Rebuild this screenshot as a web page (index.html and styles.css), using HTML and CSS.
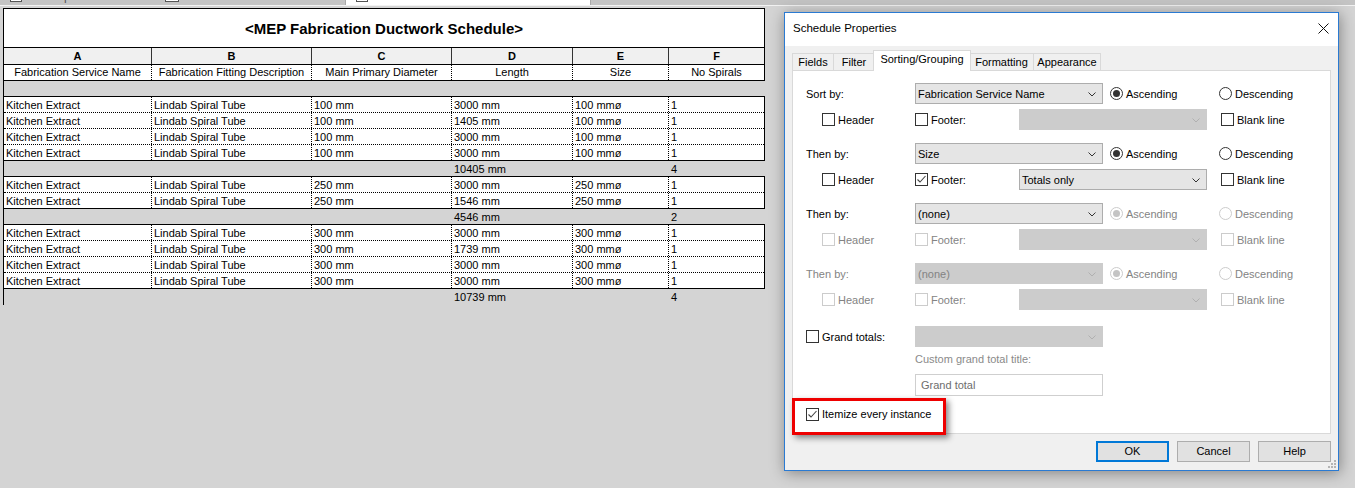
FILE: index.html
```html
<!DOCTYPE html>
<html>
<head>
<meta charset="utf-8">
<title>MEP Fabrication Ductwork Schedule</title>
<link rel="stylesheet" href="styles.css">
</head>
<body>
<div class="tabbar">
  <div class="doc-tab t1"><svg class="ticon" width="12" height="12" viewBox="0 0 12 12"><rect x="0.5" y="0.5" width="11" height="11" fill="#fff" stroke="#555"/></svg><span class="tlabel">3D - Splash Sheet</span></div>
  <div class="doc-tab t2"><svg class="ticon" width="14" height="12" viewBox="0 0 14 12"><rect x="0.5" y="0.5" width="13" height="11" fill="#fff" stroke="#555"/></svg><span class="tlabel">00 - GROUND FLOOR PLAN</span></div>
  <div class="doc-tab t3 active"><svg class="ticon" width="12" height="12" viewBox="0 0 12 12"><rect x="0.5" y="0.5" width="11" height="11" fill="#fff" stroke="#555"/></svg><span class="tlabel">MEP Fabrication Ductwork Schedul</span><span class="tclose">×</span></div>
</div>
<div class="tabline"></div>

<div class="view">
  <div class="sched">
    <div class="s-title">&lt;MEP Fabrication Ductwork Schedule&gt;</div>
    <div class="s-row s-letters"><div>A</div><div>B</div><div>C</div><div>D</div><div>E</div><div>F</div></div>
    <div class="s-row s-names"><div>Fabrication Service Name</div><div>Fabrication Fitting Description</div><div>Main Primary Diameter</div><div>Length</div><div>Size</div><div>No Spirals</div></div>
    <div class="s-gap"></div>

    <div class="s-group">
      <div class="s-row"><div>Kitchen Extract</div><div>Lindab Spiral Tube</div><div>100 mm</div><div>3000 mm</div><div>100 mmø</div><div>1</div></div>
      <div class="s-row"><div>Kitchen Extract</div><div>Lindab Spiral Tube</div><div>100 mm</div><div>1405 mm</div><div>100 mmø</div><div>1</div></div>
      <div class="s-row"><div>Kitchen Extract</div><div>Lindab Spiral Tube</div><div>100 mm</div><div>3000 mm</div><div>100 mmø</div><div>1</div></div>
      <div class="s-row"><div>Kitchen Extract</div><div>Lindab Spiral Tube</div><div>100 mm</div><div>3000 mm</div><div>100 mmø</div><div>1</div></div>
    </div>
    <div class="s-row s-total"><div></div><div></div><div></div><div>10405 mm</div><div></div><div>4</div></div>

    <div class="s-group">
      <div class="s-row"><div>Kitchen Extract</div><div>Lindab Spiral Tube</div><div>250 mm</div><div>3000 mm</div><div>250 mmø</div><div>1</div></div>
      <div class="s-row"><div>Kitchen Extract</div><div>Lindab Spiral Tube</div><div>250 mm</div><div>1546 mm</div><div>250 mmø</div><div>1</div></div>
    </div>
    <div class="s-row s-total"><div></div><div></div><div></div><div>4546 mm</div><div></div><div>2</div></div>

    <div class="s-group">
      <div class="s-row"><div>Kitchen Extract</div><div>Lindab Spiral Tube</div><div>300 mm</div><div>3000 mm</div><div>300 mmø</div><div>1</div></div>
      <div class="s-row"><div>Kitchen Extract</div><div>Lindab Spiral Tube</div><div>300 mm</div><div>1739 mm</div><div>300 mmø</div><div>1</div></div>
      <div class="s-row"><div>Kitchen Extract</div><div>Lindab Spiral Tube</div><div>300 mm</div><div>3000 mm</div><div>300 mmø</div><div>1</div></div>
      <div class="s-row"><div>Kitchen Extract</div><div>Lindab Spiral Tube</div><div>300 mm</div><div>3000 mm</div><div>300 mmø</div><div>1</div></div>
    </div>
    <div class="s-row s-total last"><div></div><div></div><div></div><div>10739 mm</div><div></div><div>4</div></div>
  </div>
</div>

<div class="dialog">
  <div class="dlg-title">
    <span>Schedule Properties</span>
    <svg class="close" width="11" height="11" viewBox="0 0 11 11"><path d="M0.5 0.5L10.5 10.5M10.5 0.5L0.5 10.5" stroke="#111" stroke-width="1"/></svg>
  </div>
  <div class="dlg-body">
    <div class="tabs">
      <div class="tab w-fields">Fields</div>
      <div class="tab w-filter">Filter</div>
      <div class="tab sel w-sort">Sorting/Grouping</div>
      <div class="tab w-fmt">Formatting</div>
      <div class="tab w-app">Appearance</div>
    </div>
    <div class="panel">
      <div class="grp">
        <div class="srow">
          <span class="lbl">Sort by:</span>
          <div class="combo">Fabrication Service Name<svg class="chev" width="8" height="5" viewBox="0 0 8 5"><path d="M0.5 0.5L4 4L7.5 0.5" fill="none" stroke="#333"/></svg></div>
          <span class="rad asc"><i class="rb on"></i>Ascending</span>
          <span class="rad"><i class="rb"></i>Descending</span>
        </div>
        <div class="orow">
          <span class="chk hdr"><i class="cb"></i>Header</span>
          <span class="chk ftr"><i class="cb"></i>Footer:</span>
          <div class="combo dis"><svg class="chev" width="8" height="5" viewBox="0 0 8 5"><path d="M0.5 0.5L4 4L7.5 0.5" fill="none" stroke="#b0b0b0"/></svg></div>
          <span class="chk blank"><i class="cb"></i>Blank line</span>
        </div>
      </div>

      <div class="grp">
        <div class="srow">
          <span class="lbl">Then by:</span>
          <div class="combo">Size<svg class="chev" width="8" height="5" viewBox="0 0 8 5"><path d="M0.5 0.5L4 4L7.5 0.5" fill="none" stroke="#333"/></svg></div>
          <span class="rad asc"><i class="rb on"></i>Ascending</span>
          <span class="rad"><i class="rb"></i>Descending</span>
        </div>
        <div class="orow">
          <span class="chk hdr"><i class="cb"></i>Header</span>
          <span class="chk ftr"><i class="cb"><svg width="11" height="11" viewBox="0 0 11 11"><path d="M1.5 5.5L4 8L9.5 2" fill="none" stroke="#444" stroke-width="1.1"/></svg></i>Footer:</span>
          <div class="combo">Totals only<svg class="chev" width="8" height="5" viewBox="0 0 8 5"><path d="M0.5 0.5L4 4L7.5 0.5" fill="none" stroke="#333"/></svg></div>
          <span class="chk blank"><i class="cb"></i>Blank line</span>
        </div>
      </div>

      <div class="grp">
        <div class="srow">
          <span class="lbl">Then by:</span>
          <div class="combo">(none)<svg class="chev" width="8" height="5" viewBox="0 0 8 5"><path d="M0.5 0.5L4 4L7.5 0.5" fill="none" stroke="#333"/></svg></div>
          <span class="rad asc dis"><i class="rb on"></i>Ascending</span>
          <span class="rad dis"><i class="rb"></i>Descending</span>
        </div>
        <div class="orow dis">
          <span class="chk hdr"><i class="cb"></i>Header</span>
          <span class="chk ftr"><i class="cb"></i>Footer:</span>
          <div class="combo dis"><svg class="chev" width="8" height="5" viewBox="0 0 8 5"><path d="M0.5 0.5L4 4L7.5 0.5" fill="none" stroke="#b0b0b0"/></svg></div>
          <span class="chk blank"><i class="cb"></i>Blank line</span>
        </div>
      </div>

      <div class="grp dis">
        <div class="srow">
          <span class="lbl">Then by:</span>
          <div class="combo dis">(none)<svg class="chev" width="8" height="5" viewBox="0 0 8 5"><path d="M0.5 0.5L4 4L7.5 0.5" fill="none" stroke="#b0b0b0"/></svg></div>
          <span class="rad asc"><i class="rb on"></i>Ascending</span>
          <span class="rad"><i class="rb"></i>Descending</span>
        </div>
        <div class="orow">
          <span class="chk hdr"><i class="cb"></i>Header</span>
          <span class="chk ftr"><i class="cb"></i>Footer:</span>
          <div class="combo dis"><svg class="chev" width="8" height="5" viewBox="0 0 8 5"><path d="M0.5 0.5L4 4L7.5 0.5" fill="none" stroke="#b0b0b0"/></svg></div>
          <span class="chk blank"><i class="cb"></i>Blank line</span>
        </div>
      </div>

      <div class="grand">
        <span class="chk glbl"><i class="cb"></i>Grand totals:</span>
        <div class="combo dis"><svg class="chev" width="8" height="5" viewBox="0 0 8 5"><path d="M0.5 0.5L4 4L7.5 0.5" fill="none" stroke="#b0b0b0"/></svg></div>
      </div>
      <div class="custom-lbl">Custom grand total title:</div>
      <div class="tbox">Grand total</div>
      <div class="itemize"><span class="chk"><i class="cb"><svg width="11" height="11" viewBox="0 0 11 11"><path d="M1.5 5.5L4 8L9.5 2" fill="none" stroke="#444" stroke-width="1.1"/></svg></i>Itemize every instance</span></div>
    </div>
    <div class="buttons">
      <div class="btn ok">OK</div>
      <div class="btn">Cancel</div>
      <div class="btn">Help</div>
    </div>
  </div>
  <svg class="grip" width="9" height="9" viewBox="0 0 9 9" fill="#b4b4b4"><rect x="6" y="0" width="2" height="2"/><rect x="3" y="3" width="2" height="2"/><rect x="6" y="3" width="2" height="2"/><rect x="0" y="6" width="2" height="2"/><rect x="3" y="6" width="2" height="2"/><rect x="6" y="6" width="2" height="2"/></svg>
</div>

<div class="highlight"></div>
</body>
</html>
```

FILE: styles.css
```css
* { box-sizing: border-box; }
html, body { margin: 0; padding: 0; }
body {
  width: 1355px;
  height: 488px;
  overflow: hidden;
  position: relative;
  background: #d4d4d4;
  font-family: "Liberation Sans", Arial, sans-serif;
  font-size: 11px;
  color: #000;
}

/* top document tabs (only their bottom edge is visible) */
.tabbar {
  height: 5px;
  overflow: hidden;
  background: #c4c4c4;
  display: flex;
}
.doc-tab {
  height: 20px;
  margin-top: -14px;
  display: flex;
  align-items: center;
  gap: 8px;
  padding: 0 10px;
  color: #555;
  font-size: 12px;
  white-space: nowrap;
}
.doc-tab.t1 { width: 155px; }
.doc-tab.t2 { width: 190px; }
.doc-tab.t3 { width: 246px; }
.doc-tab.active {
  background: #fff;
  border: 1px solid #a9a9a9;
  color: #222;
}
.ticon { flex: none; }
.tclose { margin-left: auto; }
.tabline { height: 1px; background: #f2f2f2; }

/* schedule */
.view { padding: 2px 0 0 3px; }
.sched { width: 762px; }
.s-title {
  height: 40px;
  border: 1px solid #000;
  background: #fff;
  display: flex;
  align-items: center;
  justify-content: center;
  font-weight: bold;
  font-size: 15px;
}
.s-row {
  display: grid;
  grid-template-columns: 148px 160px 140px 121px 96px 95px;
  height: 16px;
  border-left: 1px solid #000;
  border-right: 1px solid #000;
}
.s-row > div {
  border-right: 1px dotted #000;
  padding-left: 2px;
  line-height: 16px;
  white-space: nowrap;
  overflow: hidden;
}
.s-row > div:last-child { border-right: none; }
.s-letters {
  height: 17px;
  background: #f0f0f0;
  border-bottom: 1px solid #000;
  font-weight: bold;
}
.s-letters > div {
  border-right: 1px solid #333;
  text-align: center;
  line-height: 16px;
  padding-left: 0;
}
.s-names {
  background: #fff;
  border-bottom: 1px solid #000;
}
.s-names > div { text-align: center; padding-left: 0; line-height: 15px; }
.s-gap { height: 15px; border-left: 1px solid #000; }
.s-group {
  border: 1px solid #000;
  background: #fff;
}
.s-group .s-row {
  border-left: none;
  border-right: none;
  border-bottom: 1px dotted #000;
}
.s-group .s-row:last-child { border-bottom: none; height: 15px; }
.s-total { height: 15px; border-right: none; }
.s-total.last { height: 16px; }
.s-total > div { border-right: none; }

/* dialog window */
.dialog {
  position: absolute;
  left: 784px;
  top: 12px;
  width: 555px;
  height: 459px;
  border: 1px solid #2a7ad2;
  background: #f0f0f0;
  box-shadow: 1px 2px 14px rgba(0, 0, 0, 0.38);
  display: flex;
  flex-direction: column;
}
.dlg-title {
  height: 33px;
  background: #fff;
  display: flex;
  align-items: center;
  justify-content: space-between;
  padding: 0 9px 3px 8px;
  font-size: 11.5px;
}
.close { margin-top: 1px; }
.dlg-body {
  flex: 1;
  padding: 4px 7px 0 7px;
  display: flex;
  flex-direction: column;
}
.tabs {
  height: 20px;
  display: flex;
  align-items: flex-end;
  position: relative;
  z-index: 1;
}
.tab {
  height: 17px;
  border: 1px solid #d9d9d9;
  border-bottom: none;
  background: #f0f0f0;
  margin-right: -1px;
  text-align: center;
  line-height: 16px;
}
.tab.sel {
  height: 21px;
  background: #fff;
  margin-bottom: -1px;
  margin-left: -1px;
  margin-right: -2px;
  line-height: 16px;
  position: relative;
}
.w-fields { width: 42px; }
.w-filter { width: 42px; }
.w-sort { width: 98px; }
.w-fmt { width: 65px; }
.w-app { width: 68px; }

.panel {
  height: 364px;
  border: 1px solid #d9d9d9;
  background: #fff;
  padding: 12px 13px 0 13px;
}
.grp { margin-bottom: 13px; }
.srow, .orow {
  height: 21px;
  display: flex;
  align-items: center;
}
.orow { margin-top: 5px; padding-left: 16px; }
.lbl { width: 109px; flex: none; }
.combo {
  width: 188px;
  height: 21px;
  flex: none;
  border: 1px solid #adadad;
  background: #e5e5e5;
  padding-left: 2px;
  display: flex;
  align-items: center;
  position: relative;
}
.combo.dis {
  background: #cccccc;
  border-color: #cccccc;
  color: #838383;
}
.chev { position: absolute; right: 6px; top: 8px; }
.rad { display: flex; align-items: center; flex: none; }
.rad.asc { width: 109px; margin-left: 7px; }
.chk { display: flex; align-items: center; flex: none; }
.chk.hdr { width: 93px; }
.chk.ftr { width: 104px; }
.chk.blank { margin-left: 14px; }
.cb {
  width: 13px;
  height: 13px;
  border: 1px solid #333;
  background: #fff;
  margin-right: 3px;
  flex: none;
  display: flex;
  align-items: center;
  justify-content: center;
}
.rb {
  width: 13px;
  height: 13px;
  border: 1px solid #333;
  border-radius: 50%;
  background: #fff;
  margin-right: 3px;
  flex: none;
  display: flex;
  align-items: center;
  justify-content: center;
}
.rb.on::after {
  content: "";
  width: 7px;
  height: 7px;
  border-radius: 50%;
  background: #333;
}
.dis, .dis .lbl { color: #838383; }
.dis .cb, .dis .rb { border-color: #cccccc; }
.dis .rb.on::after { background: #c4c4c4; }

.grand {
  margin-top: 16px;
  height: 21px;
  display: flex;
  align-items: center;
}
.chk.glbl { width: 109px; }
.custom-lbl {
  margin: 5px 0 0 109px;
  height: 15px;
  line-height: 15px;
  color: #8a8a8a;
}
.tbox {
  margin: 7px 0 0 109px;
  width: 188px;
  height: 22px;
  border: 1px solid #cfcfcf;
  background: #fff;
  color: #6d6d6d;
  padding-left: 5px;
  line-height: 20px;
}
.itemize { margin-top: 11px; height: 14px; display: flex; align-items: center; }

.buttons {
  margin-top: 7px;
  display: flex;
  justify-content: flex-end;
  gap: 8px;
}
.btn {
  width: 73px;
  height: 21px;
  border: 1px solid #adadad;
  background: #e1e1e1;
  text-align: center;
  line-height: 19px;
}
.btn.ok { border: 2px solid #0078d7; line-height: 17px; }
.grip { position: absolute; right: 1px; bottom: 1px; }

/* red annotation box */
.highlight {
  position: absolute;
  left: 792px;
  top: 398px;
  width: 154px;
  height: 37px;
  border: 3px solid #ee0000;
  box-shadow: 3px 3px 6px rgba(0, 0, 0, 0.45);
}
```
